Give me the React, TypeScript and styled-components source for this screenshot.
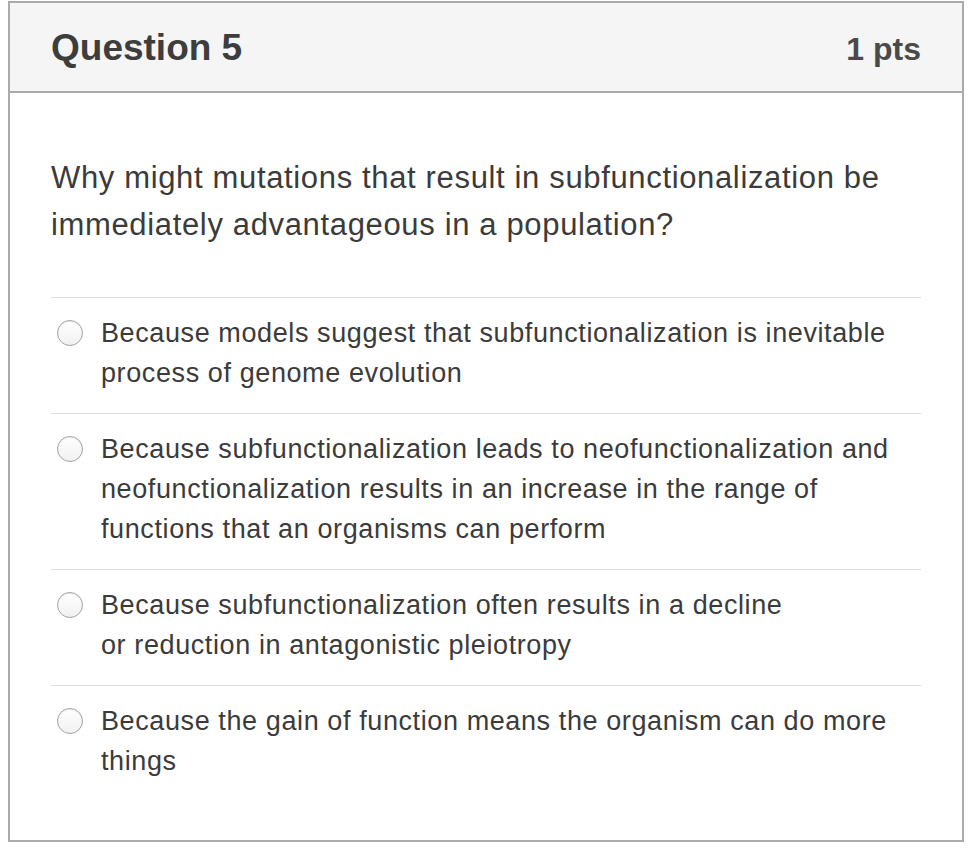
import React from 'react';
import styled, { createGlobalStyle } from 'styled-components';

const GlobalStyle = createGlobalStyle`
  html, body {
    margin: 0;
    padding: 0;
    background: #ffffff;
  }
  body {
    font-family: "Liberation Sans", Arial, Helvetica, sans-serif;
    color: #3b3b3b;
  }
`;

const Page = styled.div`
  padding: 1px 10px 0 8px;
`;

const QuestionBox = styled.div`
  width: 956px;
  height: 841px;
  box-sizing: border-box;
  border: 2px solid #aaaaaa;
  display: flex;
  flex-direction: column;
`;

const Header = styled.div`
  height: 90px;
  box-sizing: border-box;
  background: #f5f5f5;
  border-bottom: 2px solid #aaaaaa;
  display: flex;
  align-items: center;
  justify-content: space-between;
  padding: 2px 41px 0;
`;

const Title = styled.h2`
  margin: 0;
  font-size: 37px;
  font-weight: 700;
  color: #3d3d3d;
`;

const Points = styled.span`
  font-size: 32px;
  font-weight: 700;
  color: #4a4a4a;
  padding-top: 2px;
`;

const Body = styled.div`
  padding: 61px 41px 0;
`;

const Prompt = styled.p`
  margin: 0 0 49px;
  font-size: 31px;
  line-height: 47px;
  letter-spacing: 0.65px;
  color: #3b3b3b;
`;

const AnswerList = styled.div`
  display: flex;
  flex-direction: column;
`;

const Answer = styled.label`
  display: flex;
  align-items: flex-start;
  border-top: 1px solid #dddddd;
  padding: 15px 0 20px;
`;

const RadioWrap = styled.span`
  flex: 0 0 auto;
  width: 50px;
  height: 40px;
  display: flex;
  align-items: center;
  padding-left: 6px;
  box-sizing: border-box;
`;

const Radio = styled.span`
  width: 26px;
  height: 26px;
  box-sizing: border-box;
  border-radius: 50%;
  border: 1px solid #a4a4a4;
  background: linear-gradient(#ffffff, #f1f1f1);
  box-shadow: inset 0 1px 1px rgba(0, 0, 0, 0.08);
`;

const AnswerText = styled.span`
  font-size: 27px;
  line-height: 40px;
  letter-spacing: 0.6px;
  color: #3b3b3b;
`;

const answers: string[][] = [
  ['Because models suggest that subfunctionalization is inevitable', 'process of genome evolution'],
  [
    'Because subfunctionalization leads to neofunctionalization and',
    'neofunctionalization results in an increase in the range of',
    'functions that an organisms can perform',
  ],
  ['Because subfunctionalization often results in a decline', 'or reduction in antagonistic pleiotropy'],
  ['Because the gain of function means the organism can do more', 'things'],
];

export default function App() {
  return (
    <Page>
      <GlobalStyle />
      <QuestionBox>
        <Header>
          <Title>Question 5</Title>
          <Points>1 pts</Points>
        </Header>
        <Body>
          <Prompt>
            Why might mutations that result in subfunctionalization be
            <br />
            immediately advantageous in a population?
          </Prompt>
          <AnswerList>
            {answers.map((lines, i) => (
              <Answer key={i}>
                <RadioWrap>
                  <Radio />
                </RadioWrap>
                <AnswerText>
                  {lines.map((l, j) => (
                    <React.Fragment key={j}>
                      {j > 0 && <br />}
                      {l}
                    </React.Fragment>
                  ))}
                </AnswerText>
              </Answer>
            ))}
          </AnswerList>
        </Body>
      </QuestionBox>
    </Page>
  );
}
